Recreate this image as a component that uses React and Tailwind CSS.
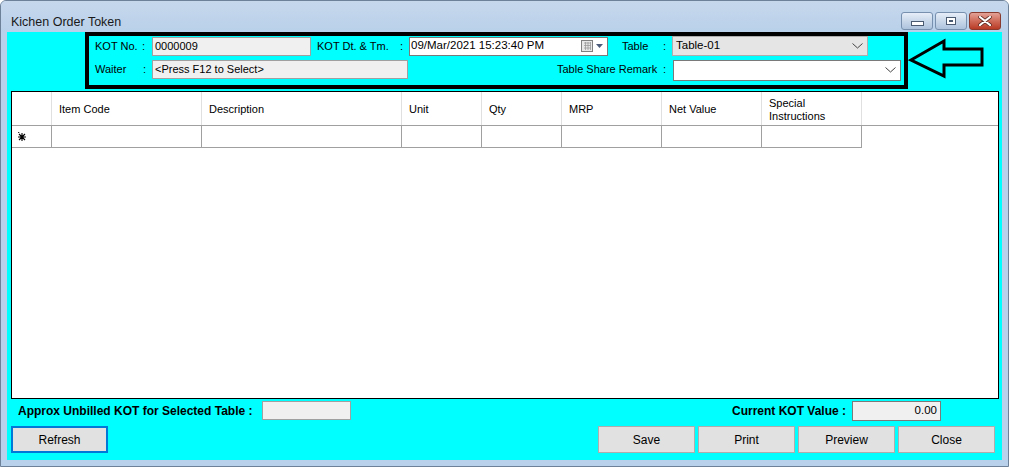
import React from 'react';

const cols = [
    { key: 'code', label: 'Item Code', w: 'w-[150px]' },
    { key: 'desc', label: 'Description', w: 'w-[200px]' },
    { key: 'unit', label: 'Unit', w: 'w-[80px]' },
    { key: 'qty', label: 'Qty', w: 'w-[80px]' },
    { key: 'mrp', label: 'MRP', w: 'w-[100px]' },
    { key: 'net', label: 'Net Value', w: 'w-[100px]' },
    { key: 'spec', label: 'Special Instructions', w: 'w-[100px]' },
];

function Chevron() {
    return (
        <svg width="11" height="6" viewBox="0 0 11 6" className="shrink-0">
            <path d="M0.5 0.5 L5.5 5 L10.5 0.5" fill="none" stroke="#444" strokeWidth="1" />
        </svg>
    );
}

function CalendarIcon() {
    return (
        <svg width="22" height="12" viewBox="0 0 22 12" className="shrink-0">
            <rect x="0.5" y="0.5" width="11" height="11" fill="#e8e8e8" stroke="#808080" />
            <path d="M3 3h7M3 5.5h7M3 8h7M4.5 2v8M7 2v8M9.5 2v8" stroke="#9a9a9a" strokeWidth="0.8" />
            <path d="M15 4h7l-3.5 4z" fill="#4a5a78" />
        </svg>
    );
}

function NewRowGlyph() {
    return (
        <svg width="10" height="10" viewBox="0 0 10 10">
            <path d="M5 1v8M1 5h8M2 2l6 6M8 2l-6 6" stroke="#000" strokeWidth="1.1" />
            <path d="M1 0.5 L2.5 0" stroke="#000" strokeWidth="1" />
        </svg>
    );
}

function WinButton({ kind }) {
    if (kind === 'close') {
        return (
            <div className="w-[32px] h-[18px] rounded-[3px] border border-[#8a3b30] bg-gradient-to-b from-[#e2a196] via-[#cf6a58] to-[#b83a24] flex items-center justify-center">
                <svg width="14" height="10" viewBox="0 0 14 10">
                    <path d="M2 1 L12 9 M12 1 L2 9" stroke="#5a2a22" strokeWidth="3.6" strokeLinecap="round" />
                    <path d="M2 1 L12 9 M12 1 L2 9" stroke="#fff" strokeWidth="2.2" strokeLinecap="round" />
                </svg>
            </div>
        );
    }
    return (
        <div className="w-[32px] h-[18px] rounded-[3px] border border-[#7690ae] bg-gradient-to-b from-[#e6eef8] via-[#c9d8ea] to-[#adc3dc] flex items-center justify-center">
            {kind === 'min' ? (
                <div className="w-[13px] h-[5px] bg-white border border-[#4a5a70] mt-[4px]" />
            ) : (
                <div className="w-[10px] h-[8px] bg-white border border-[#4a5a70] flex items-center justify-center">
                    <div className="w-[4px] h-[2px] border border-[#4a5a70]" />
                </div>
            )}
        </div>
    );
}

function Btn({ children, active }) {
    return (
        <button className={`w-[97px] h-[27px] bg-[#e1e1e1] text-[12px] text-black ${active ? 'border-2 border-[#0078d7]' : 'border border-[#adadad]'}`}>
            {children}
        </button>
    );
}

export default function App() {
    return (
        <div className="w-[1009px] h-[467px] bg-[#b9d1ea] border border-[#6d8199] rounded-t-[6px] flex flex-col overflow-hidden text-black" style={{ fontFamily: '"Liberation Sans", Arial, sans-serif' }}>
            {/* title bar */}
            <div className="h-[31px] shrink-0 bg-gradient-to-b from-[#c6d7ec] to-[#b9d1ea] flex items-start justify-between pl-[10px] pr-[7px]">
                <span className="text-[12.5px] mt-[12px] text-[#1a1a1a]">Kichen Order Token</span>
                <div className="flex gap-[2px] mt-[11px]">
                    <WinButton kind="min" />
                    <WinButton kind="max" />
                    <WinButton kind="close" />
                </div>
            </div>

            {/* client area */}
            <div className="flex-1 ml-[6px] mr-[6px] mb-[6px] bg-[#00ffff] flex flex-col text-[11px]">
                <div className="flex h-[57px] shrink-0">
                    <div className="ml-[78px] w-[823px] h-[57px] border-4 border-black pl-[6px] flex flex-col">
                        <div className="flex items-center h-[20px]">
                            <span className="w-[47px]">KOT No.</span>
                            <span className="w-[10px]">:</span>
                            <div className="w-[159px] h-[19px] bg-[#f0f0f0] border border-[#a0a0a0] pl-[2px] flex items-center">0000009</div>
                            <span className="ml-[6px] w-[83px]">KOT Dt. &amp; Tm.</span>
                            <span className="w-[9px]">:</span>
                            <div className="w-[199px] h-[19px] bg-white border border-[#7a7a7a] pl-[1px] pr-[4px] flex items-center justify-between">
                                <span className="text-[11.5px]">09/Mar/2021 15:23:40 PM</span>
                                <CalendarIcon />
                            </div>
                            <span className="ml-[14px] w-[41px]">Table</span>
                            <span className="w-[9px]">:</span>
                            <div className="w-[196px] h-[20px] bg-[#e5e5e5] border border-[#adadad] pl-[3px] pr-[4px] flex items-center justify-between">
                                <span className="text-[11.5px]">Table-01</span>
                                <Chevron />
                            </div>
                        </div>
                        <div className="flex items-center h-[22px] mt-[2px]">
                            <span className="w-[48px]">Waiter</span>
                            <span className="w-[9px]">:</span>
                            <div className="w-[256px] h-[19px] bg-[#f0f0f0] border border-[#a0a0a0] pl-[2px] flex items-center">&lt;Press F12 to Select&gt;</div>
                            <span className="ml-[149px] w-[106px]">Table Share Remark</span>
                            <span className="w-[10px]">:</span>
                            <div className="w-[228px] h-[21px] mt-[2px] bg-white border border-[#7a7a7a] pr-[4px] flex items-center justify-end">
                                <Chevron />
                            </div>
                        </div>
                    </div>
                    <svg width="80" height="57" viewBox="0 0 80 57" className="shrink-0">
                        <path d="M3 28 L36 9 L36 17 L74 17 L74 33 L36 33 L36 44 Z" fill="none" stroke="#000" strokeWidth="3" strokeLinejoin="miter" />
                    </svg>
                </div>

                {/* grid */}
                <div className="mt-[2px] ml-[4px] w-[988px] h-[308px] shrink-0 bg-white border border-black">
                    <div className="flex h-[34px] border-b border-[#a0a0a0]">
                        <div className="w-[40px] border-r border-[#e0e0e0]" />
                        {cols.map((c) => (
                            <div key={c.key} className={`${c.w} border-r border-[#e0e0e0] pl-[7px] pt-[2px] flex items-center leading-[13px]`}>
                                {c.key === 'spec' ? <span>Special<br />Instructions</span> : c.label}
                            </div>
                        ))}
                    </div>
                    <div className="flex h-[22px]">
                        <div className="w-[40px] border-r border-b border-[#a0a0a0] pl-[5px] flex items-center">
                            <NewRowGlyph />
                        </div>
                        {cols.map((c) => (
                            <div key={c.key} className={`${c.w} border-r border-b border-[#a0a0a0]`} />
                        ))}
                    </div>
                </div>

                {/* bottom totals */}
                <div className="flex items-center h-[21px] mt-[1px] shrink-0">
                    <span className="ml-[11px] w-[244px] font-bold text-[12px]">Approx Unbilled KOT for Selected Table :</span>
                    <div className="w-[89px] h-[19px] bg-[#f0f0f0] border border-[#a0a0a0]" />
                    <span className="ml-auto font-bold text-[12px]">Current KOT Value :</span>
                    <div className="ml-[6px] mr-[61px] w-[89px] h-[20px] bg-[#f0f0f0] border border-[#7a7a7a] pr-[3px] flex items-center justify-end text-[11.5px]">0.00</div>
                </div>

                {/* buttons */}
                <div className="flex mt-[5px] ml-[4px] mr-[7px]">
                    <Btn active>Refresh</Btn>
                    <div className="ml-auto flex gap-[3px]">
                        <Btn>Save</Btn>
                        <Btn>Print</Btn>
                        <Btn>Preview</Btn>
                        <Btn>Close</Btn>
                    </div>
                </div>
            </div>
        </div>
    );
}
